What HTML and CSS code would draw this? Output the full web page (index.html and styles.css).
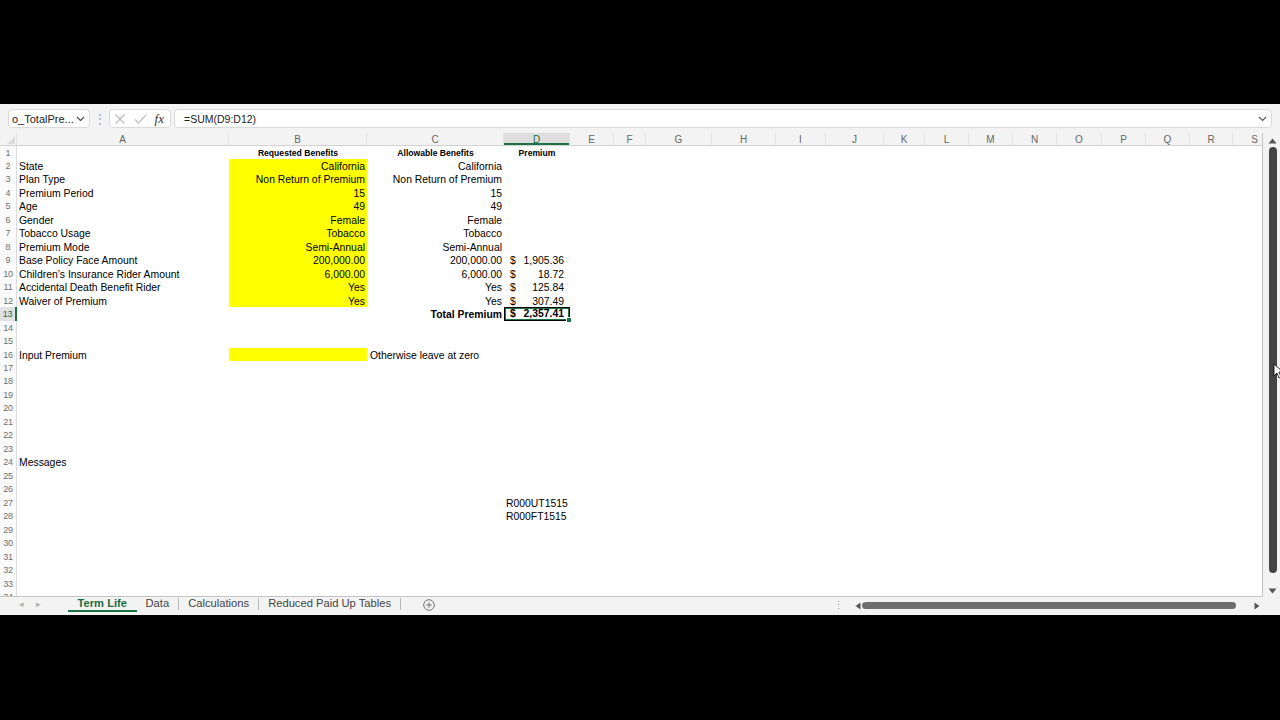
FILE: index.html
```html
<!DOCTYPE html>
<html>
<head>
<meta charset="utf-8">
<link rel="stylesheet" href="styles.css">
</head>
<body>
<div class="app">
  <div class="fbar">
    <div class="namebox"><span>o_TotalPre...</span>
      <svg class="chev" width="9" height="6" viewBox="0 0 9 6"><polyline points="1,1 4.5,4.5 8,1" fill="none" stroke="#444" stroke-width="1.1"/></svg>
    </div>
    <div class="vdots">⋮</div>
    <div class="fxbox">
      <svg width="12" height="12" viewBox="0 0 12 12"><path d="M1.5 1.5 L10.5 10.5 M10.5 1.5 L1.5 10.5" stroke="#b8b8b8" stroke-width="1.1" fill="none"/></svg>
      <svg width="13" height="12" viewBox="0 0 13 12"><polyline points="1,6.5 4.5,10 12,2" stroke="#b8b8b8" stroke-width="1.1" fill="none"/></svg>
      <span class="fx">fx</span>
    </div>
    <div class="formula"><span>=SUM(D9:D12)</span>
      <svg class="chev" width="9" height="6" viewBox="0 0 9 6"><polyline points="1,1 4.5,4.5 8,1" fill="none" stroke="#555" stroke-width="1.1"/></svg>
    </div>
  </div>

  <div class="main">
    <div class="sheet">
      <div class="colhead">
        <div class="corner"><svg width="8" height="8" viewBox="0 0 8 8"><polygon points="8,0 8,8 0,8" fill="#dcdcdc"/></svg></div>
        <div>A</div><div>B</div><div>C</div><div class="csel">D</div><div>E</div><div>F</div><div>G</div><div>H</div><div>I</div><div>J</div><div>K</div><div>L</div><div>M</div><div>N</div><div>O</div><div>P</div><div>Q</div><div>R</div><div>S</div>
      </div>
      <div class="rows">
        <div class="r"><div class="rh">1</div><div class="a"></div><div class="hd">Requested Benefits</div><div class="hd">Allowable Benefits</div><div class="hd">Premium</div></div>
        <div class="r"><div class="rh">2</div><div class="a">State</div><div class="b y">California</div><div class="c">California</div></div>
        <div class="r"><div class="rh">3</div><div class="a">Plan Type</div><div class="b y">Non Return of Premium</div><div class="c">Non Return of Premium</div></div>
        <div class="r"><div class="rh">4</div><div class="a">Premium Period</div><div class="b y">15</div><div class="c">15</div></div>
        <div class="r"><div class="rh">5</div><div class="a">Age</div><div class="b y">49</div><div class="c">49</div></div>
        <div class="r"><div class="rh">6</div><div class="a">Gender</div><div class="b y">Female</div><div class="c">Female</div></div>
        <div class="r"><div class="rh">7</div><div class="a">Tobacco Usage</div><div class="b y">Tobacco</div><div class="c">Tobacco</div></div>
        <div class="r"><div class="rh">8</div><div class="a">Premium Mode</div><div class="b y">Semi-Annual</div><div class="c">Semi-Annual</div></div>
        <div class="r"><div class="rh">9</div><div class="a">Base Policy Face Amount</div><div class="b y">200,000.00</div><div class="c">200,000.00</div><div class="acc"><span>$</span><span>1,905.36</span></div></div>
        <div class="r"><div class="rh">10</div><div class="a">Children’s Insurance Rider Amount</div><div class="b y">6,000.00</div><div class="c">6,000.00</div><div class="acc"><span>$</span><span>18.72</span></div></div>
        <div class="r"><div class="rh">11</div><div class="a">Accidental Death Benefit Rider</div><div class="b y">Yes</div><div class="c">Yes</div><div class="acc"><span>$</span><span>125.84</span></div></div>
        <div class="r"><div class="rh">12</div><div class="a">Waiver of Premium</div><div class="b y">Yes</div><div class="c">Yes</div><div class="acc"><span>$</span><span>307.49</span></div></div>
        <div class="r"><div class="rh rsel">13</div><div class="a"></div><div class="b"></div><div class="c bold">Total Premium</div><div class="acc bold active"><span>$</span><span>2,357.41</span><i class="handle"></i></div></div>
        <div class="r"><div class="rh">14</div></div>
        <div class="r"><div class="rh">15</div></div>
        <div class="r"><div class="rh">16</div><div class="a">Input Premium</div><div class="b y"></div><div class="ov">Otherwise leave at zero</div></div>
        <div class="r"><div class="rh">17</div></div>
        <div class="r"><div class="rh">18</div></div>
        <div class="r"><div class="rh">19</div></div>
        <div class="r"><div class="rh">20</div></div>
        <div class="r"><div class="rh">21</div></div>
        <div class="r"><div class="rh">22</div></div>
        <div class="r"><div class="rh">23</div></div>
        <div class="r"><div class="rh">24</div><div class="a">Messages</div></div>
        <div class="r"><div class="rh">25</div></div>
        <div class="r"><div class="rh">26</div></div>
        <div class="r"><div class="rh">27</div><div class="a"></div><div class="b"></div><div class="c"></div><div class="ov2">R000UT1515</div></div>
        <div class="r"><div class="rh">28</div><div class="a"></div><div class="b"></div><div class="c"></div><div class="ov2">R000FT1515</div></div>
        <div class="r"><div class="rh">29</div></div>
        <div class="r"><div class="rh">30</div></div>
        <div class="r"><div class="rh">31</div></div>
        <div class="r"><div class="rh">32</div></div>
        <div class="r"><div class="rh">33</div></div>
        <div class="r"><div class="rh">34</div></div>
      </div>
    </div>
    <div class="vscroll">
      <svg width="9" height="6" viewBox="0 0 9 6"><polygon points="4.5,0.5 8.5,5.5 0.5,5.5" fill="#555"/></svg>
      <div class="vthumb"></div>
      <svg width="9" height="6" viewBox="0 0 9 6"><polygon points="0.5,0.5 8.5,0.5 4.5,5.5" fill="#555"/></svg>
    </div>
  </div>

  <div class="tabbar">
    <div class="nav"><span>◂</span><span>▸</span></div>
    <div class="tab active-tab">Term Life</div>
    <div class="tab">Data</div><i class="sep"></i>
    <div class="tab">Calculations</div><i class="sep"></i>
    <div class="tab">Reduced Paid Up Tables</div><i class="sep"></i>
    <div class="add"><svg width="12" height="12" viewBox="0 0 12 12"><circle cx="6" cy="6" r="5.3" fill="none" stroke="#666" stroke-width="0.9"/><path d="M6 3.2 V8.8 M3.2 6 H8.8" stroke="#666" stroke-width="0.9"/></svg></div>
    <div class="hscroll">
      <span class="hdots">⋮</span>
      <svg width="6" height="8" viewBox="0 0 6 8"><polygon points="5.5,0.5 5.5,7.5 0.5,4" fill="#555"/></svg>
      <div class="hthumb"></div>
      <svg width="6" height="8" viewBox="0 0 6 8"><polygon points="0.5,0.5 0.5,7.5 5.5,4" fill="#555"/></svg>
    </div>
  </div>
  <svg class="cursor" width="10" height="16" viewBox="0 0 10 16"><path d="M1 1 L1 13 L4 10 L6 15 L8 14 L6 9 L10 9 Z" fill="#fff" stroke="#000" stroke-width="0.8"/></svg>
</div>
</body>
</html>
```

FILE: styles.css
```css
* { box-sizing: border-box; }
html, body { margin: 0; padding: 0; }
body { background: #000; font-family: "Liberation Sans", Arial, sans-serif; width: 1280px; height: 720px; overflow: hidden; }

.app { margin-top: 104px; height: 511px; background: #f3f3f3; display: flex; flex-direction: column; position: relative; overflow: hidden; }

/* formula bar */
.fbar { height: 29px; display: flex; align-items: center; padding: 0 8px; flex: none; }
.namebox { width: 82px; height: 19px; border: 1px solid #dadada; border-radius: 4px; background: #fff; display: flex; align-items: center; justify-content: space-between; padding: 0 4px 0 3px; font-size: 11px; color: #222; }
.vdots { width: 19px; text-align: center; color: #a0a0a0; font-size: 12px; }
.fxbox { width: 62px; height: 19px; border: 1px solid #dadada; border-radius: 4px; background: #fff; display: flex; align-items: center; justify-content: space-between; padding: 0 6px 0 4px; }
.fx { font-family: "Liberation Serif", serif; font-style: italic; font-size: 13px; color: #333; line-height: 1; }
.formula { flex: 1; margin-left: 3px; height: 19px; border: 1px solid #dadada; border-radius: 4px; background: #fff; display: flex; align-items: center; justify-content: space-between; padding: 0 4px 0 9px; font-size: 10.5px; color: #222; }

/* main */
.main { display: flex; height: 464px; flex: none; }
.sheet { width: 1263px; background: #fff; border-right: 1px solid #c4c4c4; border-bottom: 1px solid #c4c4c4; overflow: hidden; flex: none; }
.colhead { display: grid; grid-template-columns: 17px 212px 138px 137px 66px 44px 32px 66px 64px 50px 58px 41px 44px 44px 44px 45px 44px 44px 43px 44px; height: 12.5px; background: #f3f3f3; border-bottom: 1px solid #d2d2d2; width: 1400px; }
.colhead > div { font-size: 10px; color: #666; text-align: center; line-height: 13px; border-right: 1px solid #e2e2e2; overflow: hidden; }
.colhead .corner { display: flex; align-items: flex-end; justify-content: flex-end; padding: 0 1px 1px 0; }
.colhead .csel { background: #dedede; color: #1e6e42; box-shadow: inset 0 -2px 0 #1e7145; }

.rows { height: 450.5px; overflow: hidden; }
.r { display: grid; grid-template-columns: 17px 212px 138px 137px 66px; height: 13.47px; line-height: 15px; font-size: 10.4px; color: #000; }
.r > div { white-space: nowrap; height: 13.47px; }
.rh { text-align: center; font-size: 9px; color: #707070; background: #fbfbfb; border-right: 1px solid #dcdcdc; letter-spacing: -0.2px; line-height: 14px; }
.rh.rsel { background: #e1e1e1; color: #1e6e42; border-right: 2px solid #1e7145; }
.a { padding-left: 2px; }
.b { text-align: right; padding-right: 2px; }
.c { text-align: right; padding-right: 2px; }
.y { background: #ffff00; }
.hd { font-weight: bold; font-size: 8.6px; text-align: center; line-height: 14px; }
.bold { font-weight: bold; font-size: 10.4px; }
.acc { display: flex; justify-content: space-between; padding: 0 6px 0 6px; }
.acc.active { position: relative; box-shadow: inset 0 0 0 1px #000, inset 0 0 0 2px #1e7145; line-height: 14px; }
.handle { position: absolute; right: -2px; bottom: -2px; width: 4px; height: 4px; background: #1e7145; border: 1px solid #fff; box-sizing: content-box; }
.ov { padding-left: 3px; overflow: visible; }
.ov2 { padding-left: 2px; overflow: visible; }

/* vertical scroll */
.vscroll { flex: 1; display: flex; flex-direction: column; align-items: center; padding: 5px 0 3px 2px; }
.vthumb { width: 8px; flex: 1; margin: 3px 0 15px; background: #444; border-radius: 4px; }

/* tab bar */
.tabbar { flex: 1; display: flex; align-items: flex-start; font-size: 11.2px; color: #444; position: relative; }
.nav { width: 68px; height: 14px; display: flex; align-items: center; gap: 12px; padding-left: 19px; font-size: 9px; color: #b0b0b0; }
.tab { padding: 0 9px; height: 15px; line-height: 13px; white-space: nowrap; }
.active-tab { font-weight: bold; color: #1d6b3d; border-bottom: 2px solid #1e7145; padding: 0 9.5px; }
.sep { width: 1px; height: 12px; margin-top: 1px; background: #b8b8b8; display: block; }
.add { margin-left: 22px; height: 16px; display: flex; align-items: center; }
.hscroll { margin-left: auto; height: 17px; display: flex; align-items: center; padding-right: 20px; }
.hdots { color: #999; font-size: 11px; margin-right: 11px; }
.hthumb { width: 374px; height: 7px; border-radius: 4px; background: #6e6e6e; margin: 0 18px 0 1px; }

.cursor { position: absolute; left: 1273px; top: 259px; }
```
